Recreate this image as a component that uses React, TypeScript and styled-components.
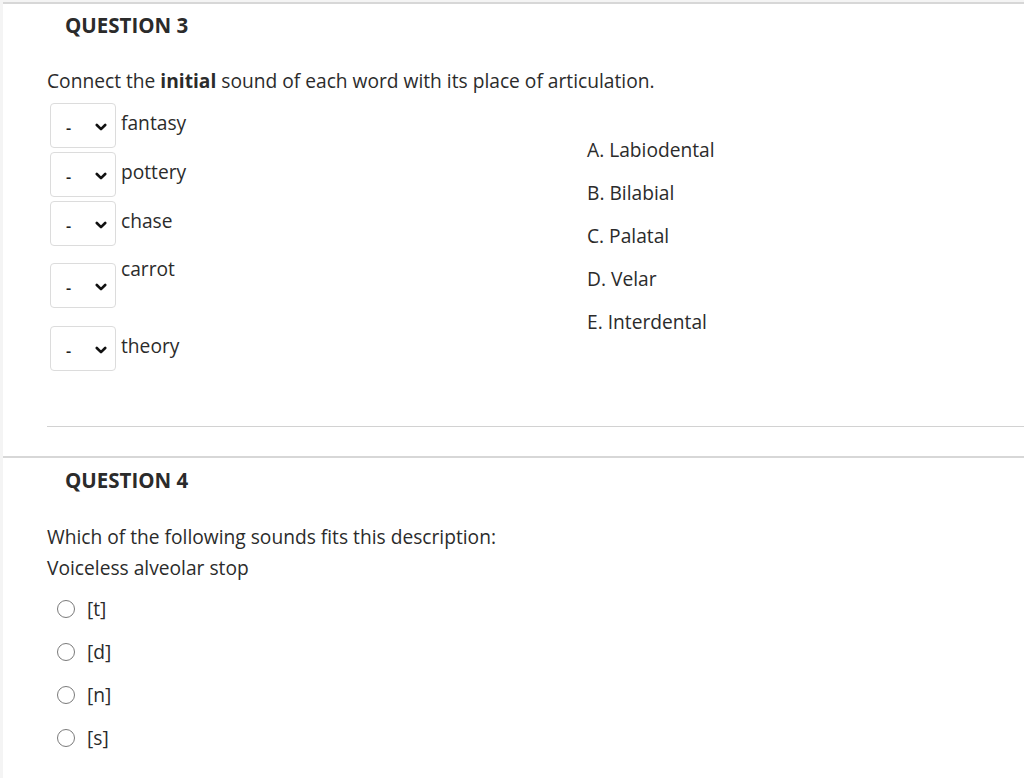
import React from "react";
import styled, { createGlobalStyle } from "styled-components";

const Global = createGlobalStyle`
  html, body { margin: 0; padding: 0; background: #f4f4f4; }
  body { font-family: "Open Sans", "Noto Sans", sans-serif; color: #2b2b2b; }
`;

const Page = styled.div`
  background: #f4f4f4;
  padding: 2px 0 0 3px;
  height: 778px;
  box-sizing: border-box;
  display: flex;
  flex-direction: column;
`;

const Card = styled.section<{ $grow?: boolean }>`
  background: #ffffff;
  border-top: 2px solid #d7d7d7;
  flex: ${(p) => (p.$grow ? "1 1 auto" : "0 0 auto")};
`;

const Heading = styled.h2<{ $pt: number }>`
  margin: 0;
  padding: ${(p) => p.$pt}px 0 0 62px;
  font-size: 20.5px;
  line-height: 28px;
  font-weight: 700;
  color: #2b2b2b;
`;

const Prompt = styled.p<{ $top: number; $lh: number }>`
  margin: ${(p) => p.$top}px 0 0 44px;
  font-size: 19.2px;
  line-height: ${(p) => p.$lh}px;
  color: #2b2b2b;
  b { font-weight: 700; }
`;

const Matching = styled.div`
  display: flex;
  margin: 9px 0 0 47px;
`;

const LeftCol = styled.div`
  width: 537px;
  display: flex;
  flex-direction: column;
`;

const MatchRow = styled.div<{ $mt: number }>`
  display: flex;
  align-items: flex-start;
  margin-top: ${(p) => p.$mt}px;
`;

const SelectBox = styled.div<{ $offset: number }>`
  margin-top: ${(p) => p.$offset}px;
  width: 66px;
  height: 45px;
  box-sizing: border-box;
  border: 1px solid #dcdcdc;
  border-radius: 4px;
  display: flex;
  align-items: center;
  justify-content: space-between;
  padding: 4px 8px 0 15px;
  font-size: 16px;
  font-weight: 600;
  color: #222;
`;

const Chevron = () => (
  <svg width="12" height="9" viewBox="0 0 12 9">
    <path d="M1.8 2 L6 6.2 L10.2 2" fill="none" stroke="#111" strokeWidth="2.6" strokeLinecap="round" strokeLinejoin="round" />
  </svg>
);

const WordLabel = styled.span<{ $offset: number }>`
  margin: ${(p) => p.$offset}px 0 0 5px;
  font-size: 19.2px;
  line-height: 24px;
  color: #2b2b2b;
`;

const RightCol = styled.ol`
  list-style: none;
  margin: 35px 0 0 0;
  padding: 0;
  display: flex;
  flex-direction: column;
  gap: 19px;
`;

const Answer = styled.li`
  font-size: 19.2px;
  line-height: 24px;
  color: #2b2b2b;
`;

const Rule = styled.hr`
  margin: 55px 0 0 44px;
  border: 0;
  border-top: 1px solid #d2d2d2;
  height: 0;
`;

const Spacer = styled.div`
  height: 29px;
`;

const Radios = styled.div`
  margin: 4px 0 0 54px;
  display: flex;
  flex-direction: column;
`;

const RadioRow = styled.label`
  display: flex;
  align-items: center;
  height: 43px;
  font-size: 19.2px;
  color: #2b2b2b;
`;

const RadioCircle = styled.span`
  width: 18px;
  height: 18px;
  box-sizing: border-box;
  border: 1.5px solid #7a7a7a;
  border-radius: 50%;
  margin-right: 12px;
`;

const words = [
  { w: "fantasy", mt: 0, sel: 0, lab: 8 },
  { w: "pottery", mt: 4, sel: 0, lab: 8 },
  { w: "chase", mt: 4, sel: 0, lab: 8 },
  { w: "carrot", mt: 11, sel: 6, lab: 0 },
  { w: "theory", mt: 18, sel: 0, lab: 8 },
];

const answers = ["A. Labiodental", "B. Bilabial", "C. Palatal", "D. Velar", "E. Interdental"];
const options = ["[t]", "[d]", "[n]", "[s]"];

export default function App() {
  return (
    <>
      <Global />
      <Page>
        <Card>
          <Heading $pt={7}>QUESTION 3</Heading>
          <Prompt $top={29} $lh={26}>
            Connect the <b>initial</b> sound of each word with its place of articulation.
          </Prompt>
          <Matching>
            <LeftCol>
              {words.map((r) => (
                <MatchRow key={r.w} $mt={r.mt}>
                  <SelectBox $offset={r.sel}>
                    <span>-</span>
                    <Chevron />
                  </SelectBox>
                  <WordLabel $offset={r.lab}>{r.w}</WordLabel>
                </MatchRow>
              ))}
            </LeftCol>
            <RightCol>
              {answers.map((a) => (
                <Answer key={a}>{a}</Answer>
              ))}
            </RightCol>
          </Matching>
          <Rule />
          <Spacer />
        </Card>
        <Card $grow>
          <Heading $pt={8}>QUESTION 4</Heading>
          <Prompt $top={27} $lh={31}>
            Which of the following sounds fits this description:
            <br />
            Voiceless alveolar stop
          </Prompt>
          <Radios>
            {options.map((o) => (
              <RadioRow key={o}>
                <RadioCircle />
                {o}
              </RadioRow>
            ))}
          </Radios>
        </Card>
      </Page>
    </>
  );
}
